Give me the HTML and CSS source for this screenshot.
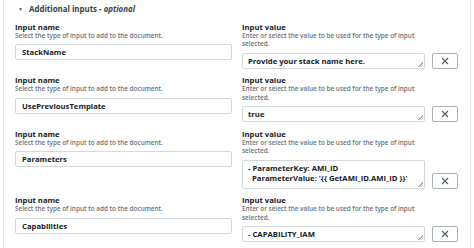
FILE: index.html
```html
<!DOCTYPE html>
<html>
<head>
<meta charset="utf-8">
<link rel="stylesheet" href="styles.css">
</head>
<body>
<div class="panel">
  <div class="header"><span class="caret">&#9660;</span><span class="title">Additional inputs - <em>optional</em></span></div>
  <div class="grid">
    <div class="cell">
      <div class="label">Input name</div>
      <div class="desc">Select the type of input to add to the document.</div>
      <div class="input">StackName</div>
    </div>
    <div class="cell">
      <div class="label">Input value</div>
      <div class="desc">Enter or select the value to be used for the type of input selected.</div>
      <div class="valrow">
        <div class="area">Provide your stack name here.</div>
        <button class="remove"><svg width="8" height="8" viewBox="0 0 8 8"><path d="M1 1L7 7M7 1L1 7" stroke="#545b64" stroke-width="1.1" fill="none"/></svg></button>
      </div>
    </div>

    <div class="cell">
      <div class="label">Input name</div>
      <div class="desc">Select the type of input to add to the document.</div>
      <div class="input">UsePreviousTemplate</div>
    </div>
    <div class="cell">
      <div class="label">Input value</div>
      <div class="desc">Enter or select the value to be used for the type of input selected.</div>
      <div class="valrow">
        <div class="area">true</div>
        <button class="remove"><svg width="8" height="8" viewBox="0 0 8 8"><path d="M1 1L7 7M7 1L1 7" stroke="#545b64" stroke-width="1.1" fill="none"/></svg></button>
      </div>
    </div>

    <div class="cell">
      <div class="label">Input name</div>
      <div class="desc">Select the type of input to add to the document.</div>
      <div class="input">Parameters</div>
    </div>
    <div class="cell">
      <div class="label">Input value</div>
      <div class="desc">Enter or select the value to be used for the type of input selected.</div>
      <div class="valrow">
        <div class="area multi">- ParameterKey: AMI_ID
  ParameterValue: '{{ GetAMI_ID.AMI_ID }}'</div>
        <button class="remove"><svg width="8" height="8" viewBox="0 0 8 8"><path d="M1 1L7 7M7 1L1 7" stroke="#545b64" stroke-width="1.1" fill="none"/></svg></button>
      </div>
    </div>

    <div class="cell">
      <div class="label">Input name</div>
      <div class="desc">Select the type of input to add to the document.</div>
      <div class="input">Capabilities</div>
    </div>
    <div class="cell">
      <div class="label">Input value</div>
      <div class="desc">Enter or select the value to be used for the type of input selected.</div>
      <div class="valrow">
        <div class="area">- CAPABILITY_IAM</div>
        <button class="remove"><svg width="8" height="8" viewBox="0 0 8 8"><path d="M1 1L7 7M7 1L1 7" stroke="#545b64" stroke-width="1.1" fill="none"/></svg></button>
      </div>
    </div>
  </div>
</div>
</body>
</html>
```

FILE: styles.css
```css
html, body {
  margin: 0;
  padding: 0;
  background: #ffffff;
}
body {
  font-family: "Open Sans", "Noto Sans", sans-serif;
  color: #16191f;
  overflow: hidden;
}
.panel {
  margin: 0 3px;
  height: 248px;
  box-sizing: border-box;
  border-left: 1px solid #e4e7e8;
  border-right: 1px solid #e4e7e8;
  padding: 0 11px;
}
.header {
  height: 18px;
  display: flex;
  align-items: center;
  padding-left: 3px;
  gap: 6px;
  font-size: 7.9px;
  font-weight: 700;
  color: #3a4047;
}
.caret {
  font-size: 5px;
  color: #545b64;
}
.title em {
  font-style: italic;
}
.grid {
  margin-top: 4.5px;
  display: grid;
  grid-template-columns: 217px 216px;
  column-gap: 10px;
  row-gap: 7.5px;
}
.cell {
  display: flex;
  flex-direction: column;
}
.label {
  font-size: 7.7px;
  font-weight: 700;
  line-height: 9px;
  color: #16191f;
}
.desc {
  font-size: 6.4px;
  line-height: 8.5px;
  color: #6b7279;
  font-weight: 600;
  max-width: 186px;
}
.input {
  margin-top: 4px;
  height: 16px;
  box-sizing: border-box;
  border: 1px solid #d3d9da;
  border-radius: 2px;
  padding: 0 6px;
  font-size: 7.7px;
  font-weight: 700;
  line-height: 14px;
}
.cell:nth-child(odd) .desc {
  height: 8.5px;
  max-width: none;
}
.valrow {
  margin-top: 4px;
  display: flex;
  align-items: flex-end;
  gap: 7px;
}
.area {
  position: relative;
  width: 183px;
  min-height: 16px;
  box-sizing: border-box;
  border: 1px solid #d3d9da;
  border-radius: 2px;
  padding: 0 6px 0 5px;
  font-size: 7.7px;
  font-weight: 700;
  line-height: 14px;
  white-space: pre;
}
.area.multi {
  height: 29px;
  padding-top: 2px;
  line-height: 10px;
}
.area::after {
  content: "";
  position: absolute;
  right: 1px;
  bottom: 1px;
  width: 5px;
  height: 5px;
  background: linear-gradient(135deg, transparent 0 48%, #a9b0b3 48% 62%, transparent 62% 76%, #a9b0b3 76% 90%, transparent 90%);
}
.remove {
  width: 26px;
  height: 16px;
  box-sizing: border-box;
  padding: 0;
  margin: 0;
  border: 1px solid #a9b1b3;
  border-radius: 2px;
  background: #ffffff;
  display: flex;
  align-items: center;
  justify-content: center;
}
.remove svg {
  display: block;
}
```
